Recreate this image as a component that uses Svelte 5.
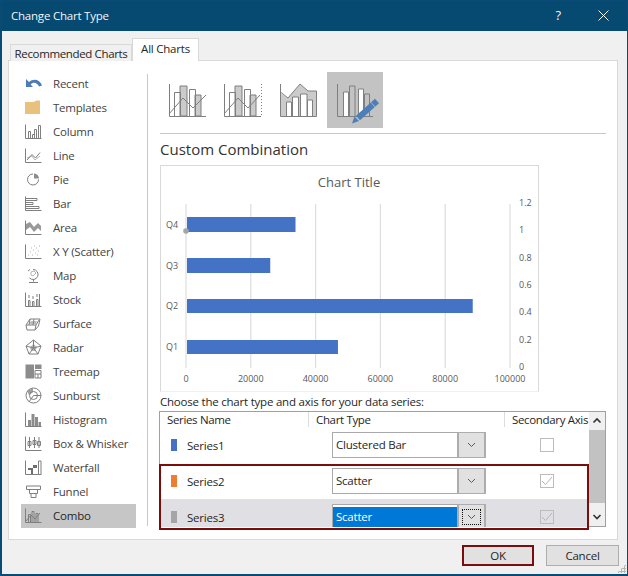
<script>
  const chartTypes = [
    { name: 'Recent', fill: 'M1 4V12H8L5.6 9.6C8 6.8 12 7.2 14 11.5L17 10.5C15 4.5 8.5 3 4 7Z', color: '#4a7db5' },
    { name: 'Templates', fill: 'M0 3H9L11 1.5H15V15H0Z', color: '#e8c17f' },
    { name: 'Column', line: 'M.5 1.5V15.5H16.5M3.5 15V8.5H5.5V15M7.5 15V11.5H9.5V15M9.5 15V6.5H11.5V15M13.5 15V2.5H15.5V15' },
    { name: 'Line', line: 'M.5 1.5V15.5H16.5M2 13L7 7.5L10.5 11L15 5.5', soft: 'M2 11L7 9L10 13L15 9' },
    { name: 'Pie', line: 'M8 3A5.5 5.5 0 1 0 13.5 8.5', fill: 'M9 2.5A5.5 5.5 0 0 1 14 7.5H9Z', color: '#8c8c8c' },
    { name: 'Bar', line: 'M.5 1.5V15.5H16.5M1 3.5H12V5.5H1M1 7.5H8V9.5H1M1 11.5H14V13.5H1' },
    { name: 'Area', line: 'M.5 1.5V15.5H16.5', fill: 'M1 5L5 3L9 8L13 4L16 7V12L13 9L9 13L5 8L1 11Z', color: '#999999' },
    { name: 'X Y (Scatter)', line: 'M.5 1.5V15.5H16.5', soft: 'M3 12h1M5 9h1M7 12h1M8 7h1M10 10h1M11 5h1M13 8h1M14 3h1M6 5h1M12 12h1M9 3h1' },
    { name: 'Map', line: 'M8 2.5A5 5 0 1 1 4.5 11M3 4L5 2.5M8.5 12.5V14.5M4 15.5H13', soft: 'M6 5L9 4L11 6L8 9L6 8Z' },
    { name: 'Stock', line: 'M.5 1.5V15.5H16.5M3.5 15V9.5H5V15M7.5 15V10.5H9V15M11.5 15V8.5H13V15M4 4V7M8 5V8M12 3V6M14.5 3V15' },
    { name: 'Surface', line: 'M1 10L5 4H15L13.5 11L10 15H2ZM1 10H11L14 5M11 10L10 15M5 4L4 10M9 4L8 10', fill: 'M4 9H11L12 6H6Z', color: '#bdbdbd' },
    { name: 'Radar', line: 'M8.5 1L16 7L13 15H4L1 7ZM8.5 1V9L16 7M8.5 9L13 15M8.5 9L4 15M8.5 9L1 7', fill: 'M8.5 5L12 8L10 12H6L5 8Z', color: '#b5b5b5' },
    { name: 'Treemap', fill: 'M.5 1.5H9V15.5H.5ZM10 1.5H16.5V6H10Z', color: '#8c8c8c', line: 'M10 7.5H16V15H10ZM10 11H16M13 11V15' },
    { name: 'Sunburst', line: 'M8.5 1A7.5 7.5 0 1 1 8.5 16A7.5 7.5 0 1 1 8.5 1M8.5 4.5A4 4 0 1 0 8.5 12.5A4 4 0 1 0 8.5 4.5M8.5 8.5L4 15M8.5 8.5H16', fill: 'M2 4L8 1V5L4 8Z', color: '#a0a0a0' },
    { name: 'Histogram', line: 'M.5 1.5V15.5H16.5', fill: 'M3 9H6V15H3ZM6.5 3H9.5V15H6.5ZM10 6H13V15H10ZM13.5 11H16V15H13.5Z', color: '#8c8c8c' },
    { name: 'Box & Whisker', line: 'M.5 1.5V15.5H16.5M4.5 2V13M9.5 2V13M14 2V13M3 6.5H6V10.5H3ZM8 5.5H11V9.5H8ZM12.5 6.5H15.5V10.5H12.5Z' },
    { name: 'Waterfall', line: 'M.5 1.5V15.5H16.5M13.5 15V2H16V15', fill: 'M3 9H8V15H6V11H3ZM8 6H12V9H8Z', color: '#6e6e6e' },
    { name: 'Funnel', line: 'M1.5 3H15.5V6.5H1.5ZM4.5 6.5V10.5H12.5V6.5M6 10.5V14.5H11V10.5' },
    { name: 'Combo', line: 'M.5 1.5V15.5H16.5M3.5 15V7.5H5.5V15M7 15V4.5H9V15M11 15V6.5H13V15M1 14L6 8L10 12L15 6' },
  ];

  const wideCharts = [
    { bars: 'M15.5 44V20.5H21.5V44M30.5 44V17.5H36.5V44', grey: 'M21 14H28V44H21ZM36 23H42V44H36Z', axis: 'M10.5 12V44.5H47', trend: 'M10 42L24 26L34 36L47 23' },
    { bars: 'M14.5 44V20.5H20.5V44M29.5 44V17.5H35.5V44', grey: 'M20 14H27V44H20ZM35 23H41V44H35Z', axis: 'M9.5 12V44.5H46', trend: 'M9 42L23 26L33 36L45 23', dots: 'M46.5 12V44' },
  ];

  const xTicks = [0, 20000, 40000, 60000, 80000, 100000];
  const tickAt = (v) => 26 + (v / 100000) * 324;
  const yRight = ['1.2', '1', '0.8', '0.6', '0.4', '0.2', '0'];
  const quarters = [
    { label: 'Q4', y: 52, h: 15, value: 33800 },
    { label: 'Q3', y: 93, h: 15, value: 26000 },
    { label: 'Q2', y: 134, h: 14, value: 88500 },
    { label: 'Q1', y: 175, h: 14, value: 46900 },
  ];
  const series = [
    { name: 'Series2', color: '#ed7d31', type: 'Scatter' },
    { name: 'Series3', color: '#a5a5a5', type: 'Scatter', active: true },
  ];
</script>

{#snippet dropdown(type, active)}
  <div class="combo" class:active>
    <span class="combo-value">{type}</span>
    <span class="combo-btn">
      <svg width="9" height="6" viewBox="0 0 9 6"><path d="M1 1L4.5 4.5L8 1" /></svg>
    </span>
  </div>
{/snippet}

{#snippet checkbox(checked)}
  <span class="check">
    {#if checked}
      <svg width="12" height="12" viewBox="0 0 12 12"><path d="M1 6L4.5 9.5L11 2" /></svg>
    {/if}
  </span>
{/snippet}

<div class="dialog">
  <header class="titlebar">
    <span>Change Chart Type</span>
    <div class="title-actions">
      <span class="help">?</span>
      <svg width="11" height="11" viewBox="0 0 11 11"><path d="M.5 .5L10.5 10.5M10.5 .5L.5 10.5" /></svg>
    </div>
  </header>

  <div class="tabs">
    <div class="tab">Recommended Charts</div>
    <div class="tab current">All Charts</div>
  </div>

  <main class="panel">
    <nav class="sidebar">
      {#each chartTypes as item}
        <div class="side-item" class:selected={item.name === 'Combo'}>
          <svg class="side-icon" width="17" height="17" viewBox="0 0 17 17">
            {#if item.fill}<path d={item.fill} fill={item.color} />{/if}
            {#if item.soft}<path class="soft" d={item.soft} />{/if}
            {#if item.line}<path class="stroke" d={item.line} />{/if}
          </svg>
          <span>{item.name}</span>
        </div>
      {/each}
    </nav>

    <div class="divider"></div>

    <section class="content">
      <div class="variants">
        {#each wideCharts as c}
          <div class="variant">
            <svg width="56" height="56" viewBox="0 0 56 56">
              <path class="grey-bar" d={c.grey} />
              <path class="stroke" d={c.bars} />
              <path class="stroke" d={c.grey} />
              <path class="stroke" d={c.axis} />
              <path class="stroke" d={c.trend} />
              {#if c.dots}<path class="dots" d={c.dots} />{/if}
            </svg>
          </div>
        {/each}
        <div class="variant">
          <svg width="56" height="56" viewBox="0 0 56 56">
            <path class="grey-bar" d="M9 21L17 26L29 12L37 19H45V44H9Z" />
            <path class="white-bar" d="M15.5 44V30H20.5V44M21.5 44V25H27.5V44M29.5 44V22H36V44M36.5 44V28H41.5V44" />
            <path class="stroke" d="M9.5 12V44.5H45.5V19H37L29 12L17 26L9.5 20" />
          </svg>
        </div>
        <div class="variant selected">
          <svg width="56" height="56" viewBox="0 0 56 56">
            <path class="white-bar" d="M16.5 44V20H21.5V44M31.5 44V17H36.5V44" />
            <path class="stroke" d="M10.5 12V44.5H46M22.5 44V14H28V44M37.5 44V22H42.5V44" />
            <path class="pencil" d="M31 46L50 29" />
            <path class="pencil-gap" d="M44 30.5L48.5 35.5" />
            <path d="M25 51.5L32 49L27.5 44.5Z" fill="#4a7fb8" />
          </svg>
        </div>
      </div>

      <h2>Custom Combination</h2>

      <div class="chart">
        <svg width="379" height="227" viewBox="0 0 379 227">
          <text class="chart-title" x="189" y="22">Chart Title</text>
          {#each xTicks as t}
            <line class="grid" x1={tickAt(t)} x2={tickAt(t)} y1="39" y2="203" />
            <text class="tick" x={tickAt(t)} y="217">{t}</text>
          {/each}
          {#each quarters as q}
            <rect x="27" y={q.y} width={tickAt(q.value) - 27} height={q.h} fill="#4472c4" />
            <text class="tick" x="12" y={q.y + q.h / 2 + 3}>{q.label}</text>
          {/each}
          <circle cx="26" cy="66" r="2.8" fill="#a5a5a5" />
          {#each yRight as v, i}
            <text class="tick right" x="359" y={41 + i * 27.33}>{v}</text>
          {/each}
        </svg>
      </div>

      <p class="prompt">Choose the chart type and axis for your data series:</p>

      <div class="table">
        <div class="table-main">
          <div class="table-head">
            <span>Series Name</span>
            <span>Chart Type</span>
            <span>Secondary Axis</span>
          </div>
          <div class="row">
            <div class="series"><i style="background: #4472c4"></i>Series1</div>
            <div class="cell">{@render dropdown('Clustered Bar', false)}</div>
            <div class="cell center">{@render checkbox(false)}</div>
          </div>
          <div class="marked">
            <div class="marked-rows">
              {#each series as s}
                <div class="row" class:shaded={s.active}>
                  <div class="series"><i style="background: {s.color}"></i>{s.name}</div>
                  <div class="cell">{@render dropdown(s.type, s.active)}</div>
                  <div class="cell center">{@render checkbox(true)}</div>
                </div>
              {/each}
            </div>
            <div class="frame"></div>
          </div>
        </div>
        <div class="scrollbar">
          <svg width="16" height="18" viewBox="0 0 16 18"><path d="M4.5 10.5L8 7L11.5 10.5" /></svg>
          <div class="thumb"></div>
          <svg class="down" width="16" height="18" viewBox="0 0 16 18"><path d="M4.5 7L8 10.5L11.5 7" /></svg>
        </div>
      </div>
    </section>
  </main>

  <footer class="footer">
    <button class="btn ok">OK</button>
    <button class="btn">Cancel</button>
    <div class="grip"></div>
  </footer>
</div>

<style>
  :global(body) {
    margin: 0;
    background: #f0f0f0;
  }

  .dialog {
    width: 628px;
    height: 576px;
    box-sizing: border-box;
    display: flex;
    flex-direction: column;
    background: #f0f0f0;
    border: 1px solid #0a4b75;
    border-left-width: 2px;
    border-bottom-width: 2px;
    font-family: "Open Sans", "Noto Sans", sans-serif;
    font-size: 11.5px;
    letter-spacing: -0.22px;
    color: #262626;
  }

  .titlebar {
    height: 30px;
    flex: none;
    display: flex;
    align-items: center;
    justify-content: space-between;
    padding: 0 18px 2px 9px;
    box-sizing: border-box;
    background: #064a72;
    color: #f2f6f9;
  }

  .title-actions {
    display: flex;
    align-items: center;
    gap: 37px;
  }

  .title-actions svg path {
    stroke: #f4f7fa;
    fill: none;
  }

  .help {
    font-size: 13px;
  }

  .tabs {
    display: flex;
    align-items: flex-end;
    height: 30px;
    padding-left: 8px;
    flex: none;
    box-sizing: border-box;
    position: relative;
    z-index: 1;
    margin-bottom: -1px;
  }

  .tab {
    width: 122px;
    height: 17px;
    box-sizing: border-box;
    display: flex;
    align-items: center;
    justify-content: center;
    white-space: nowrap;
    letter-spacing: -0.36px;
    background: #f0f0f0;
    border: 1px solid #d9d9d9;
    border-bottom: 0;
  }

  .tab.current {
    width: 67px;
    height: 23px;
    padding-bottom: 4px;
    letter-spacing: -0.22px;
    background: #fff;
  }

  .panel {
    height: 480px;
    margin: 0 9px 0 6px;
    flex: none;
    display: flex;
    padding: 11px 12px 0;
    box-sizing: border-box;
    background: #fff;
    border: 1px solid #d9d9d9;
  }

  .sidebar {
    width: 115px;
    flex: none;
  }

  .side-item {
    height: 24px;
    box-sizing: border-box;
    display: flex;
    align-items: center;
    gap: 11px;
    padding: 0 0 2px 4px;
    color: #444;
  }

  .side-item.selected {
    background: #c6c6c6;
    color: #262626;
  }

  .side-icon {
    flex: none;
  }

  .stroke {
    fill: none;
    stroke: #7f7f7f;
  }

  .soft {
    fill: none;
    stroke: #b5b5b5;
  }

  .divider {
    width: 1px;
    height: 452px;
    margin: 2px 12px 0 11px;
    flex: none;
    background: #c8c8c8;
  }

  .content {
    width: 446px;
    flex: none;
  }

  .variants {
    display: flex;
    margin-left: -1px;
    height: 56px;
  }

  .variant {
    width: 56px;
    height: 56px;
  }

  .variant.selected {
    background: #c3c3c3;
  }

  .variant svg {
    display: block;
  }

  .grey-bar {
    fill: #cbcbcb;
  }

  .white-bar {
    fill: #fff;
    stroke: #7f7f7f;
  }

  .dots {
    fill: none;
    stroke: #7f7f7f;
    stroke-dasharray: 1 2;
  }

  .pencil {
    fill: none;
    stroke: #4a7fb8;
    stroke-width: 6;
  }

  .pencil-gap {
    fill: none;
    stroke: #c3c3c3;
    stroke-width: 0.8;
  }

  h2 {
    margin: 5px 0 0;
    padding: 5px 0 6px;
    border-top: 1px solid #c8c8c8;
    font-size: 15px;
    line-height: 20px;
    font-weight: 400;
    letter-spacing: 0;
    color: #333;
  }

  .chart {
    width: 379px;
    height: 227px;
    box-sizing: border-box;
    border: 1px solid #d9d9d9;
    border-bottom-color: #f0f0f0;
  }

  .chart svg {
    display: block;
    margin: -1px;
  }

  .chart-title {
    font-size: 13px;
    fill: #595959;
    text-anchor: middle;
    letter-spacing: 0;
  }

  .tick {
    font-size: 9px;
    fill: #595959;
    text-anchor: middle;
    letter-spacing: 0;
  }

  .tick.right {
    text-anchor: start;
  }

  .grid {
    stroke: #dedede;
    stroke-width: 1.2;
  }

  .prompt {
    margin: 0;
    height: 19px;
    line-height: 20px;
  }

  .table {
    width: 447px;
    height: 116px;
    margin-left: -1px;
    box-sizing: border-box;
    display: flex;
    border: 1px solid #a0a0a0;
  }

  .table-main {
    width: 429px;
    flex: none;
  }

  .table-head {
    height: 15px;
    display: grid;
    grid-template-columns: 148px 196px 85px;
    letter-spacing: -0.34px;
  }

  .table-head span {
    padding-left: 7px;
    line-height: 15px;
    white-space: nowrap;
    box-sizing: border-box;
  }

  .table-head span + span {
    border-left: 1px solid #dcdcdc;
  }

  .row {
    height: 36px;
    display: grid;
    grid-template-columns: 148px 196px 85px;
    align-items: start;
  }

  .row.shaded {
    background: #e0dfe4;
  }

  .series {
    display: flex;
    align-items: center;
    height: 36px;
    padding-left: 11px;
    box-sizing: border-box;
  }

  .series i {
    width: 6px;
    height: 12px;
    margin-right: 10px;
  }

  .cell {
    padding-top: 5px;
  }

  .cell.center {
    display: flex;
    justify-content: center;
    padding-top: 11px;
  }

  .combo {
    margin-left: 24px;
    width: 154px;
    height: 26px;
    box-sizing: border-box;
    display: flex;
    background: #fff;
    border: 1px solid #a9a9a9;
  }

  .combo-value {
    flex: 1;
    line-height: 24px;
    padding-left: 3px;
  }

  .combo.active .combo-value {
    background: #0078d7;
    color: #fff;
    margin: 2px 0 0 0;
    line-height: 20px;
  }

  .combo-btn {
    width: 25px;
    flex: none;
    display: flex;
    align-items: center;
    justify-content: center;
    background: #e1e1e1;
    border: 2px solid #adadad;
    border-width: 1px 2px 1px 2px;
    margin: -1px -1px -1px 0;
  }

  .combo.active .combo-btn svg {
    outline: 1px dotted #111;
    outline-offset: 4px;
  }

  .combo-btn path {
    fill: none;
    stroke: #5a5a5a;
  }

  .check {
    width: 14px;
    height: 14px;
    box-sizing: border-box;
    display: block;
    border: 1px solid #bcbcbc;
  }

  .check svg {
    display: block;
  }

  .check path {
    fill: none;
    stroke: #b5b5b5;
  }

  .marked {
    position: relative;
  }

  .marked-rows {
    height: 64px;
    overflow: hidden;
  }

  .frame {
    position: absolute;
    left: -1px;
    right: 0;
    top: 1px;
    bottom: -3px;
    border: 2px solid #7b0d0d;
    pointer-events: none;
  }

  .scrollbar {
    flex: 1;
    display: flex;
    flex-direction: column;
    background: #f0f0f0;
  }

  .scrollbar svg {
    display: block;
    flex: none;
  }

  .scrollbar path {
    fill: none;
    stroke: #333;
    stroke-width: 1.6;
  }

  .thumb {
    height: 73px;
    background: #c2c2c2;
  }

  .down {
    margin-top: auto;
  }

  .footer {
    flex: 1;
    display: flex;
    gap: 12px;
    padding: 5px 8px 0 0;
    justify-content: flex-end;
    align-items: flex-start;
    position: relative;
  }

  .btn {
    width: 73px;
    height: 21px;
    padding: 0;
    background: #e1e1e1;
    border: 1px solid #adadad;
    font: inherit;
    letter-spacing: inherit;
    color: #262626;
  }

  .btn.ok {
    width: 72px;
    border: 2px solid #7b0d0d;
  }

  .grip {
    position: absolute;
    right: 1px;
    bottom: 1px;
    width: 9px;
    height: 9px;
    background: radial-gradient(circle, #b5b5b5 1px, transparent 1.2px) 0 0 / 3px 3px;
    clip-path: polygon(100% 0, 100% 100%, 0 100%);
  }
</style>
